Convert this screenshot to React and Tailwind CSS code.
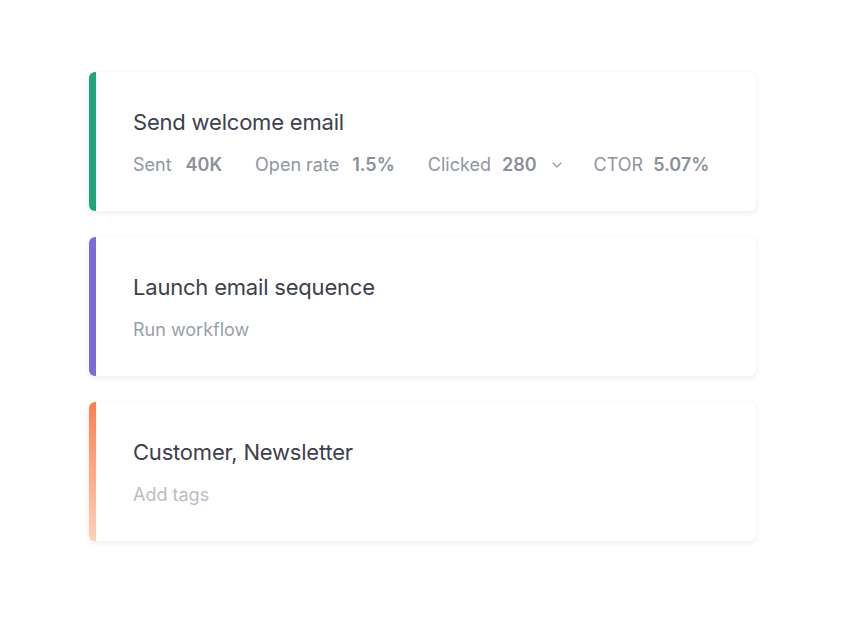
import { ChevronDown } from 'lucide-react';

const font = { fontFamily: 'Inter, "Noto Sans", sans-serif' };

function Card({ bar, title, children }) {
  return (
    <div className="flex h-[139px] w-[667px] overflow-hidden rounded-md bg-white shadow-[0_2px_6px_rgba(15,23,42,0.08),0_0_1px_rgba(15,23,42,0.06)]">
      <div className={`w-[7px] shrink-0 ${bar}`} />
      <div className="flex flex-col gap-[17px] pl-[37px] pt-9">
        <h3 className="text-[22px] leading-7 tracking-[-0.2px] text-[#3c414d]">{title}</h3>
        {children}
      </div>
    </div>
  );
}

export default function App() {
  return (
    <div className="min-h-screen bg-white" style={font}>
      <div className="flex flex-col gap-[26px] pl-[89px] pt-[72px]">
        <Card bar="bg-[#1fa57b]" title="Send welcome email">
          <div className="flex items-center text-[18px] leading-6 text-[#8f96a3]">
            <span>Sent</span>
            <b className="ml-[14px] font-semibold text-[#8a909c]">40K</b>
            <span className="ml-[33px]">Open rate</span>
            <b className="ml-[13px] font-semibold text-[#8a909c]">1.5%</b>
            <span className="ml-[33px]">Clicked</span>
            <b className="ml-[11px] font-semibold text-[#8a909c]">280</b>
            <ChevronDown className="ml-[12px] h-4 w-4" strokeWidth={1.75} />
            <span className="ml-[29px]">CTOR</span>
            <b className="ml-[10px] font-semibold text-[#8a909c]">5.07%</b>
          </div>
        </Card>
        <Card bar="bg-[#7f6bd8]" title="Launch email sequence">
          <p className="text-[18px] leading-6 text-[#9aa0ab]">Run workflow</p>
        </Card>
        <Card bar="bg-gradient-to-b from-[#ff7d4d] to-[#ffd0b8]" title="Customer, Newsletter">
          <p className="text-[18px] leading-6 text-[#b9bdc5]">Add tags</p>
        </Card>
      </div>
    </div>
  );
}
